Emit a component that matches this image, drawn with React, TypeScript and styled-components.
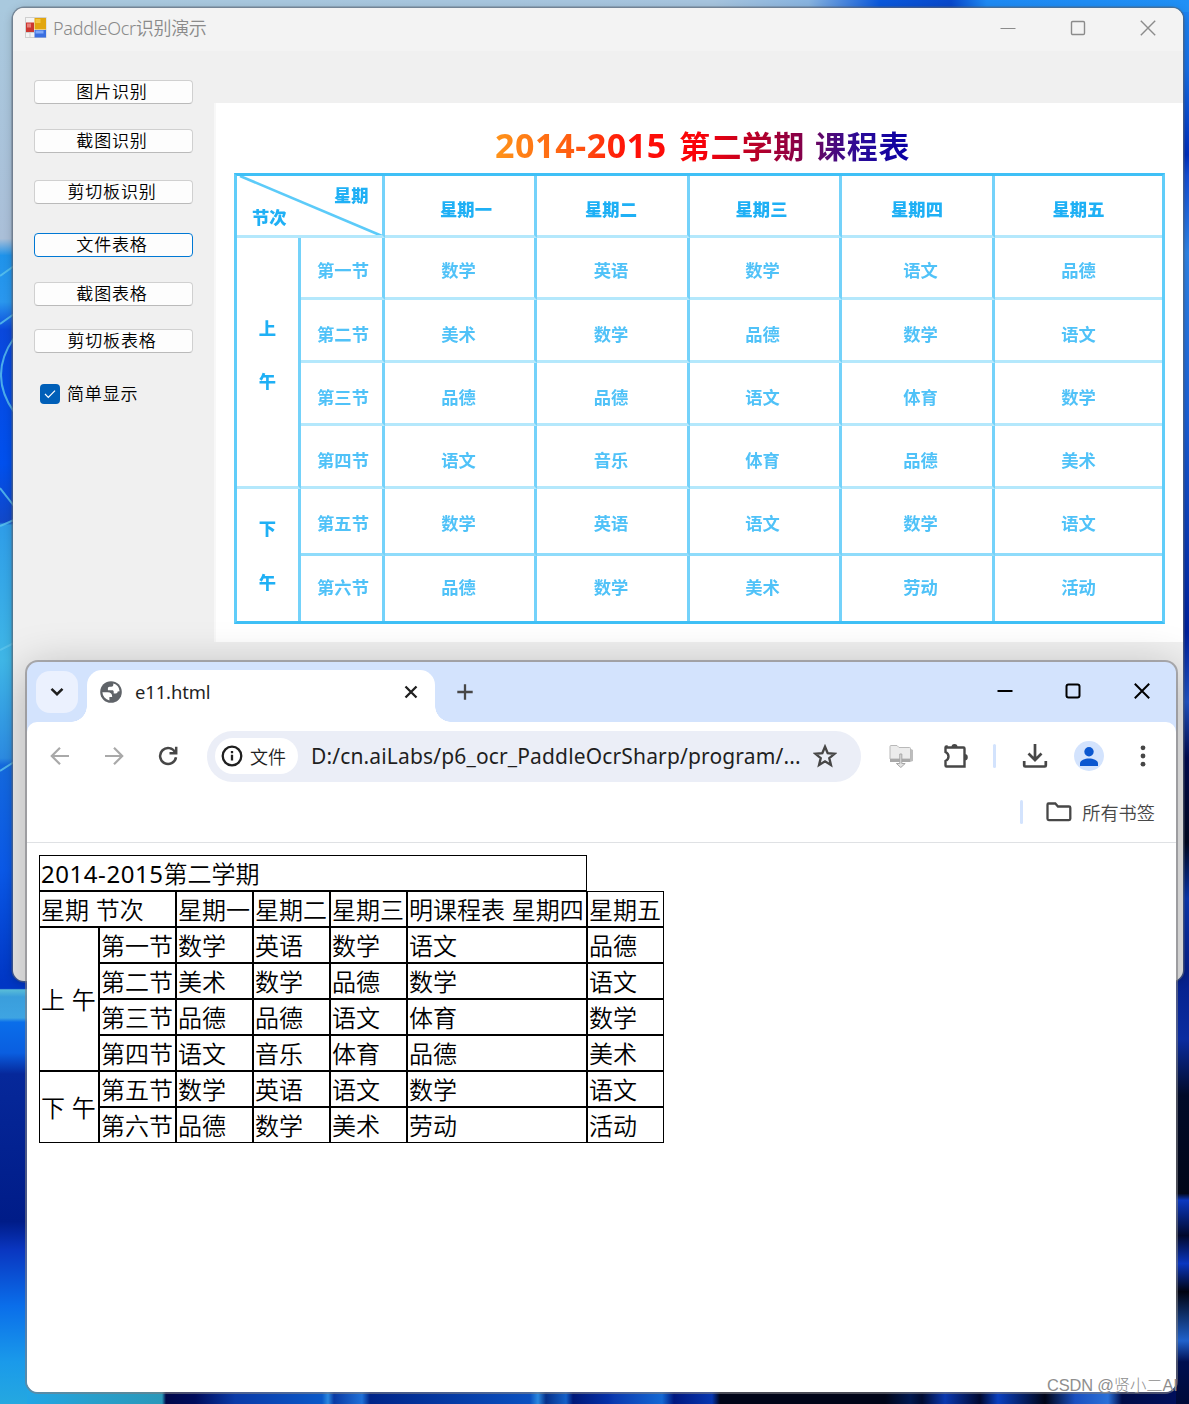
import React from "react";
import styled, { createGlobalStyle } from "styled-components";

const Global = createGlobalStyle`
  * { box-sizing: border-box; }
  body { margin: 0; overflow: hidden; }
`;

const UI = `"Noto Sans", "Noto Sans CJK SC", sans-serif`;
const CJK = `"Noto Sans CJK SC", "Noto Sans", sans-serif`;

const Desktop = styled.div`
  position: relative;
  width: 1189px;
  height: 1404px;
  overflow: hidden;
  background: #0a4ad8;
  font-family: ${UI};
`;

const Wallpaper = styled.svg`
  position: absolute;
  inset: 0;
`;

/* ---------- form window ---------- */

const FormWindow = styled.section`
  position: absolute;
  left: 13px;
  top: 8px;
  width: 1170px;
  height: 973px;
  border-radius: 11px;
  background: #f0f0f0;
  box-shadow: 0 0 0 1.5px rgba(90, 100, 115, 0.62), 0 2px 10px rgba(0, 0, 0, 0.25);
  display: flex;
  flex-direction: column;
  overflow: hidden;
`;

const FormTitleBar = styled.header`
  flex: none;
  height: 43px;
  background: #f3f3f3;
  display: flex;
  align-items: center;
  justify-content: space-between;
  padding: 0 27px 3px 12px;
`;

const FormTitle = styled.div`
  display: flex;
  align-items: center;
  gap: 6px;
  color: #8a8a8a;
  font-size: 18px;
  line-height: 24px;
  font-weight: 350;
  letter-spacing: -0.3px;
`;

const FormTitleText = styled.span`
  padding-bottom: 1px;
`;

const Controls = styled.div<{ $gap: number }>`
  display: flex;
  align-items: center;
  gap: ${(p) => p.$gap}px;
`;

const FormBody = styled.div`
  flex: 1;
  display: flex;
  align-items: flex-start;
`;

const Sidebar = styled.nav`
  flex: none;
  width: 201px;
  padding: 29px 0 0 21px;
  display: flex;
  flex-direction: column;
`;

const SideButton = styled.button<{ $after: number; $focus?: boolean }>`
  width: 159px;
  height: 24px;
  margin: 0 0 ${(p) => p.$after}px;
  padding: 0 3px 3px 0;
  border: 1px solid ${(p) => (p.$focus ? "#0078d4" : "#d0d0d0")};
  border-bottom-color: ${(p) => (p.$focus ? "#0078d4" : "#bababa")};
  border-radius: 4px;
  background: #fdfdfd;
  color: #000;
  font-family: ${CJK};
  font-weight: 350;
  font-size: 17px;
  letter-spacing: 0.85px;
  line-height: 20px;
  white-space: nowrap;
`;

const CheckRow = styled.label`
  display: flex;
  align-items: center;
  gap: 7px;
  padding-left: 6px;
  height: 24px;
  font-family: ${CJK};
  font-weight: 350;
  font-size: 17px;
  line-height: 20px;
  letter-spacing: 0.85px;
  color: #000;
`;

const CheckText = styled.span`
  padding-bottom: 2px;
`;

const CheckBox = styled.span`
  width: 20px;
  height: 20px;
  border-radius: 4px;
  background: #005fb8;
  display: flex;
  align-items: center;
  justify-content: center;
`;

const Picture = styled.div`
  flex: none;
  width: 969px;
  height: 539px;
  margin-top: 52px;
  background: #fff;
  border-left: 2px solid #f8f8f8;
  padding-left: 18px;
`;

const PictureTitle = styled.h1`
  margin: 0 0 0 261px;
  height: 70px;
  padding-top: 19px;
  display: flex;
  font-family: ${CJK};
  font-size: 31px;
  line-height: 46px;
  font-weight: 700;
  filter: blur(0.4px);
  width: 420px;
  white-space: nowrap;
  color: transparent;
  background: linear-gradient(90deg, #ff941a 0, #ff5a10 80px, #ff1408 130px, #fa0208 205px, #c40020 250px, #860048 305px, #500a78 335px, #2a0a98 365px, #0a00a4 410px);
  -webkit-background-clip: text;
  background-clip: text;
`;

const TitlePart = styled.span<{ $w: number; $size: number; $ls: number; $font?: string }>`
  width: ${(p) => p.$w}px;
  font-size: ${(p) => p.$size}px;
  letter-spacing: ${(p) => p.$ls}px;
  ${(p) => (p.$font ? `font-family: ${p.$font};` : "")}
`;

const Schedule = styled.div`
  display: grid;
  width: 931px;
  height: 451px;
  grid-template-columns: 64px 84px 152px 153px 152px 153px 1fr;
  grid-template-rows: 62px 62px 63px 63px 63px 67px 1fr;
  border: 3px solid #3fc0f6;
  border-left-color: #60cdf9;
  border-right-color: #60cdf9;
`;

const SchCell = styled.div<{
  $col: number;
  $row: number;
  $cs?: number;
  $rs?: number;
  $head?: boolean;
  $dx?: number;
  $dy?: number;
  $lastCol?: boolean;
  $lastRow?: boolean;
}>`
  grid-column: ${(p) => p.$col} / span ${(p) => p.$cs || 1};
  grid-row: ${(p) => p.$row} / span ${(p) => p.$rs || 1};
  display: flex;
  flex-direction: column;
  align-items: center;
  justify-content: center;
  padding-left: ${(p) => Math.max(0, (p.$dx || 0) * 2)}px;
  padding-right: ${(p) => Math.max(0, -(p.$dx || 0) * 2)}px;
  padding-top: ${(p) => Math.max(0, (p.$dy || 0) * 2)}px;
  padding-bottom: ${(p) => Math.max(0, -(p.$dy || 0) * 2)}px;
  border-right: ${(p) => (p.$lastCol ? "0" : "3px solid #74d2fa")};
  border-bottom: ${(p) => (p.$lastRow ? "0" : `3px solid ${p.$row === 6 ? "#8fdcfb" : "#b4e8fc"}`)};
  font-family: ${CJK};
  font-size: 17.3px;
  line-height: 24px;
  font-weight: ${(p) => (p.$head ? 900 : 700)};
  color: ${(p) => (p.$head ? "#1fb0f5" : "#50c2f8")};
  white-space: nowrap;

  span { filter: blur(0.6px); }
`;

const HalfDay = styled(SchCell)<{ $gap: number }>`
  gap: ${(p) => p.$gap}px;
  color: #1fb0f5;
`;

const Corner = styled.div`
  grid-column: 1 / span 2;
  grid-row: 1;
  border-right: 3px solid #74d2fa;
  border-bottom: 3px solid #b4e8fc;
  display: grid;
  grid-template: 100% / 100%;

  & > * { grid-area: 1 / 1; }
`;

const CornerText = styled.span<{ $top: number; $left: number }>`
  padding: ${(p) => p.$top}px 0 0 ${(p) => p.$left}px;
  font-family: ${CJK};
  font-size: 17.3px;
  line-height: 24px;
  font-weight: 900;
  color: #1fb0f5;
  filter: blur(0.6px);
`;

/* ---------- browser window ---------- */

const BrowserWindow = styled.section`
  position: absolute;
  left: 27px;
  top: 662px;
  width: 1149px;
  height: 730px;
  border-radius: 11px;
  background: #d3e3fd;
  box-shadow: 0 0 0 2px rgba(125, 125, 130, 0.6);
  display: flex;
  flex-direction: column;
  overflow: hidden;
`;

const WindowShade = styled.div`
  position: absolute;
  left: 13px;
  top: 8px;
  width: 1170px;
  height: 973px;
  border-radius: 11px;
  overflow: hidden;

  &::after {
    content: "";
    position: absolute;
    left: 14px;
    top: 654px;
    width: 1149px;
    height: 730px;
    border-radius: 11px;
    box-shadow: 0 10px 46px 2px rgba(0, 0, 0, 0.28);
  }
`;

const TabStrip = styled.div`
  flex: none;
  height: 60px;
  display: flex;
  align-items: flex-start;
`;

const TabSearch = styled.button`
  flex: none;
  width: 42px;
  height: 42px;
  margin: 9px 9px 0;
  padding: 0;
  border: 0;
  border-radius: 14px;
  background: #ebf1fe;
  display: flex;
  align-items: center;
  justify-content: center;
`;

const Tab = styled.div`
  position: relative;
  width: 348px;
  height: 52px;
  margin-top: 8px;
  border-radius: 15px 15px 0 0;
  background: #fff;
  display: flex;
  align-items: center;
  padding: 0 17px 8px 13px;
  font-size: 18.4px;
  color: #1f1f1f;

  &::before,
  &::after {
    content: "";
    position: absolute;
    bottom: 0;
    width: 16px;
    height: 16px;
  }
  &::before {
    left: -16px;
    background: radial-gradient(circle at 0 0, transparent 15.5px, #fff 16px);
  }
  &::after {
    right: -16px;
    background: radial-gradient(circle at 100% 0, transparent 15.5px, #fff 16px);
  }
`;

const TabTitle = styled.span`
  flex: 1;
  padding: 0 0 2px 13px;
  font-family: "Noto Sans", sans-serif;
  letter-spacing: -0.1px;
`;

const NewTab = styled.div`
  padding: 22px 0 0 22px;
  line-height: 0;
`;

const BrowserControls = styled(Controls)`
  margin-left: auto;
  padding: 21px 26.5px 0 0;
`;

const Toolbar = styled.div`
  flex: none;
  height: 121px;
  border-radius: 10px 10px 0 0;
  background: #fff;
  border-bottom: 1px solid #dfe1e4;
`;

const NavRow = styled.div`
  height: 68px;
  display: flex;
  align-items: center;
  padding-left: 21px;
`;

const Glyph = styled.svg<{ $ml?: number }>`
  flex: none;
  display: block;
  margin-left: ${(p) => p.$ml || 0}px;
`;

const Omnibox = styled.div`
  width: 654px;
  height: 51px;
  margin-left: 29px;
  border-radius: 26px;
  background: #ebeef7;
  display: flex;
  align-items: center;
  padding: 0 24px 0 8px;
`;

const FileChip = styled.div`
  width: 83px;
  height: 36px;
  border-radius: 18px;
  background: #fff;
  display: flex;
  align-items: center;
  gap: 7px;
  padding-left: 6px;
  font-family: ${CJK};
  font-weight: 350;
  font-size: 18px;
  color: #1f1f1f;
  white-space: nowrap;
`;

const Address = styled.span`
  flex: 1;
  padding: 0 0 1px 13px;
  font-family: "Noto Sans", sans-serif;
  font-size: 21px;
  letter-spacing: 0.15px;
  color: #1f1f1f;
  white-space: nowrap;
`;

const Divider = styled.i<{ $ml: number }>`
  width: 3px;
  height: 24px;
  margin-left: ${(p) => p.$ml}px;
  border-radius: 2px;
  background: #d3e3fd;
`;

const Avatar = styled.div`
  width: 30px;
  height: 30px;
  margin-left: 26px;
  border-radius: 50%;
  background: #d3e3fd;
  display: flex;
  align-items: center;
  justify-content: center;
`;

const BookmarkRow = styled.div`
  display: flex;
  align-items: center;
  justify-content: flex-end;
  height: 44px;
  padding-right: 21px;
  font-family: ${CJK};
  font-weight: 350;
  font-size: 18.2px;
  color: #474747;
`;

const BookmarkLabel = styled.span`
  padding: 0 0 0 10px;
`;

const Page = styled.main`
  flex: 1;
  background: #fff;
  padding: 12px;
`;

const ResultTable = styled.table`
  table-layout: fixed;
  width: 625px;
  border-collapse: separate;
  border-spacing: 0;
  font-family: ${CJK};
  font-weight: 350;
  font-size: 24px;
  line-height: 30px;
  word-spacing: 1.5px;
  color: #000;

  tr { height: 36px; }
  td {
    height: 36px;
    border: 1px solid #000;
    padding: 1px 0 1px 1px;
    white-space: nowrap;
    text-align: left;
    vertical-align: middle;
  }
`;

const Digits = styled.span`
  font-family: "Noto Sans", sans-serif;
  font-weight: 400;
  letter-spacing: 0.55px;
`;

const Watermark = styled.div`
  position: absolute;
  left: 1047px;
  top: 1373px;
  width: 134px;
  white-space: nowrap;
  font-family: "Liberation Sans", "Noto Sans CJK SC", sans-serif;
  font-weight: 300;
  font-size: 16.4px;
  line-height: 24px;
  letter-spacing: -0.15px;
  color: #8e8e8e;
`;

const DAYS = ["星期一", "星期二", "星期三", "星期四", "星期五"];
const LESSONS = [
  ["第一节", "数学", "英语", "数学", "语文", "品德"],
  ["第二节", "美术", "数学", "品德", "数学", "语文"],
  ["第三节", "品德", "品德", "语文", "体育", "数学"],
  ["第四节", "语文", "音乐", "体育", "品德", "美术"],
  ["第五节", "数学", "英语", "语文", "数学", "语文"],
  ["第六节", "品德", "数学", "美术", "劳动", "活动"],
];
const HEAD_DX = [6.5, -1, -3, 0, 0];
const CELL_DX = [1.5, -1, -1, -2, 3.5, 0];
const ROW_DY = [2, 3.5, 4, 4, 2, -1.5];

const BUTTONS: { text: string; after: number; focus?: boolean }[] = [
  { text: "图片识别", after: 25 },
  { text: "截图识别", after: 27 },
  { text: "剪切板识别", after: 29 },
  { text: "文件表格", after: 25, focus: true },
  { text: "截图表格", after: 23 },
  { text: "剪切板表格", after: 29 },
];

/* colour runs along the bottom edge of the wallpaper: [x, colour] */
const BOTTOM_STOPS: [number, string][] = [
  [0, "#1ea8f0"],
  [90, "#289fcc"],
  [162, "#2a98ba"],
  [166, "#00084a"],
  [195, "#000c5c"],
  [235, "#0a3aa8"],
  [322, "#0a58c8"],
  [328, "#2a88e0"],
  [334, "#0a3aa4"],
  [362, "#1f70d8"],
  [370, "#002488"],
  [530, "#0a50c0"],
  [538, "#2a88e0"],
  [546, "#06308a"],
  [566, "#1460c8"],
  [573, "#001878"],
  [608, "#0430a8"],
  [614, "#0a3ab0"],
  [662, "#1468d4"],
  [674, "#001880"],
  [712, "#0636b0"],
  [720, "#000418"],
  [885, "#000418"],
  [910, "#001850"],
  [922, "#000a30"],
  [945, "#0a38b0"],
  [980, "#000830"],
  [998, "#0a40c0"],
  [1045, "#000418"],
  [1075, "#1a50c0"],
  [1108, "#2a70d8"],
  [1122, "#000c48"],
  [1189, "#001060"],
];

function DesktopArt() {
  return (
    <Wallpaper width="1189" height="1404" viewBox="0 0 1189 1404">
      <defs>
        <linearGradient id="left" gradientUnits="userSpaceOnUse" x1="0" y1="0" x2="0" y2="1404">
          <stop offset="0" stopColor="#a9c9de" />
          <stop offset=".17" stopColor="#aabfd8" />
          <stop offset=".182" stopColor="#1f93ea" />
          <stop offset=".215" stopColor="#2a97ee" />
          <stop offset=".235" stopColor="#0a48dc" />
          <stop offset=".33" stopColor="#0050ee" />
          <stop offset=".372" stopColor="#1248c8" />
          <stop offset=".374" stopColor="#2f9de8" />
          <stop offset=".47" stopColor="#3fb6e6" />
          <stop offset=".54" stopColor="#2c8ae0" />
          <stop offset=".545" stopColor="#1468dc" />
          <stop offset=".62" stopColor="#0a58e6" />
          <stop offset=".70" stopColor="#0036c4" />
          <stop offset=".704" stopColor="#0036c4" />
          <stop offset=".705" stopColor="#58bcd8" />
          <stop offset=".71" stopColor="#3a9edc" />
          <stop offset=".725" stopColor="#3ea4e2" />
          <stop offset=".728" stopColor="#0a6eea" />
          <stop offset=".75" stopColor="#0a5ee0" />
          <stop offset=".765" stopColor="#06289a" />
          <stop offset=".87" stopColor="#001c88" />
          <stop offset=".89" stopColor="#0a36c0" />
          <stop offset=".93" stopColor="#0a6eea" />
          <stop offset=".97" stopColor="#1a9aea" />
          <stop offset="1" stopColor="#25a8e0" />
        </linearGradient>
        <linearGradient id="right" gradientUnits="userSpaceOnUse" x1="0" y1="0" x2="0" y2="1404">
          <stop offset="0" stopColor="#1e88f5" />
          <stop offset=".05" stopColor="#1670e8" />
          <stop offset=".11" stopColor="#0030c0" />
          <stop offset=".125" stopColor="#1550d8" />
          <stop offset=".18" stopColor="#2f86ea" />
          <stop offset=".3" stopColor="#1a60d8" />
          <stop offset=".45" stopColor="#0022a0" />
          <stop offset=".5" stopColor="#2154c4" />
          <stop offset=".54" stopColor="#000a50" />
          <stop offset=".6" stopColor="#000820" />
          <stop offset=".64" stopColor="#0a38b0" />
          <stop offset=".69" stopColor="#06208a" />
          <stop offset=".74" stopColor="#0a2ca0" />
          <stop offset=".78" stopColor="#010a28" />
          <stop offset=".85" stopColor="#010618" />
          <stop offset=".855" stopColor="#0b38c0" />
          <stop offset=".88" stopColor="#01082c" />
          <stop offset=".9" stopColor="#0a36c0" />
          <stop offset=".92" stopColor="#000210" />
          <stop offset=".955" stopColor="#2062cc" />
          <stop offset=".97" stopColor="#000e50" />
          <stop offset="1" stopColor="#000a38" />
        </linearGradient>
        <linearGradient id="top">
          <stop offset="0" stopColor="#a9c9de" />
          <stop offset=".6" stopColor="#a6c4de" />
          <stop offset=".68" stopColor="#88b4e0" />
          <stop offset=".74" stopColor="#0a58dc" />
          <stop offset=".8" stopColor="#0848cc" />
          <stop offset=".83" stopColor="#1e8af4" />
          <stop offset="1" stopColor="#2090f6" />
        </linearGradient>
        <linearGradient id="bottom" gradientUnits="userSpaceOnUse" x1="0" y1="0" x2="1189" y2="0">
          {BOTTOM_STOPS.map(([x, c]) => (
            <stop key={x} offset={x / 1189} stopColor={c} />
          ))}
        </linearGradient>
      </defs>
      <rect width="600" height="1404" fill="url(#left)" />
      <rect x="600" width="589" height="1404" fill="url(#right)" />
      <rect width="1189" height="12" fill="url(#top)" />
      <rect x="27" y="1384" width="1149" height="20" fill="url(#bottom)" />
      <g fill="none" stroke="#5cc4ec" strokeWidth="2" opacity=".8">
        <path d="M0 276 14 266M0 324 14 314M14 338Q-12 375 14 412M0 488 14 506M0 526 14 520M0 650 14 643M0 771 14 762" />
      </g>
    </Wallpaper>
  );
}

function FormIcon() {
  return (
    <Glyph width="22" height="22" viewBox="0 0 22 22">
      <rect x=".5" y=".5" width="20.5" height="20" fill="#f4f4f4" stroke="#cfcfcf" />
      <path d="M.5 15.500h9M5 15.500v5" stroke="#cfcfcf" />
      <rect x="1" y="5.500" width="8" height="9.500" fill="#cc3730" />
      <rect x="2" y="6.500" width="4" height="4" fill="#e8807a" />
      <rect x="9.500" y="1" width="11.500" height="11.500" fill="#e2a60f" />
      <rect x="10.500" y="2" width="5" height="4" fill="#f2c640" />
      <rect x="9.500" y="13" width="11.500" height="7.500" fill="#3a6fe0" />
      <rect x="10.500" y="13.500" width="8" height="3" fill="#7fa8f8" />
    </Glyph>
  );
}

function CaptionIcons({ color, weight, r }: { color: string; weight: number; r: number }) {
  return (
    <>
      <Glyph width="16" height="16" viewBox="0 0 16 16" stroke={color} strokeWidth={weight > 1.5 ? weight : 1}>
        <path d={weight > 1.5 ? "M.5 8h15" : "M.5 8.500h15"} />
      </Glyph>
      <Glyph width="16" height="16" viewBox="0 0 16 16" fill="none" stroke={color} strokeWidth={weight}>
        <rect x="1.500" y="1.500" width="13" height="13" rx={r} />
      </Glyph>
      <Glyph width="16" height="16" viewBox="0 0 16 16" stroke={color} strokeWidth={weight}>
        <path d="m.8.8 14.400 14.400M15.200.8.8 15.200" />
      </Glyph>
    </>
  );
}

function FormApp() {
  return (
    <FormWindow>
      <FormTitleBar>
        <FormTitle>
          <FormIcon />
          <FormTitleText>PaddleOcr识别演示</FormTitleText>
        </FormTitle>
        <Controls $gap={54}>
          <CaptionIcons color="#8b8b8b" weight={1.4} r={1.2} />
        </Controls>
      </FormTitleBar>
      <FormBody>
        <Sidebar>
          {BUTTONS.map((b) => (
            <SideButton key={b.text} $after={b.after} $focus={b.focus}>
              {b.text}
            </SideButton>
          ))}
          <CheckRow>
            <CheckBox>
              <svg width="12" height="10" viewBox="0 0 12 10" fill="none" stroke="#fff" strokeWidth="1.200">
                <path d="m1 5 3.300 3.300L11 1.600" />
              </svg>
            </CheckBox>
            <CheckText>简单显示</CheckText>
          </CheckRow>
        </Sidebar>
        <Picture>
          <PictureTitle>
            <TitlePart $w={184} $size={34} $ls={0.6} $font={`"Noto Sans", sans-serif`}>2014-2015</TitlePart>
            <TitlePart $w={136} $size={31} $ls={0.4}>第二学期</TitlePart>
            <TitlePart $w={100} $size={31} $ls={0.8}>课程表</TitlePart>
          </PictureTitle>
          <Schedule>
            <Corner>
              <svg width="100%" height="100%" viewBox="0 0 145 59" preserveAspectRatio="none">
                <path d="M3 0 145 60" stroke="#5ccbf9" strokeWidth="2.600" />
              </svg>
              <CornerText $top={7} $left={97}>星期</CornerText>
              <CornerText $top={29} $left={15}>节次</CornerText>
            </Corner>
            {DAYS.map((d, i) => (
              <SchCell key={d} $col={i + 3} $row={1} $head $dx={HEAD_DX[i]} $dy={3} $lastCol={i === 4}>
                <span>{d}</span>
              </SchCell>
            ))}
            <HalfDay $col={1} $row={2} $rs={4} $head $gap={29} $dy={-8}>
              <span>上</span>
              <span>午</span>
            </HalfDay>
            <HalfDay $col={1} $row={6} $rs={2} $head $gap={30} $dy={-0.5} $lastRow>
              <span>下</span>
              <span>午</span>
            </HalfDay>
            {LESSONS.map((row, r) =>
              row.map((t, c) => (
                <SchCell
                  key={`${r}-${c}`}
                  $col={c + 2}
                  $row={r + 2}
                  $dx={CELL_DX[c]}
                  $dy={ROW_DY[r]}
                  $lastCol={c === 5}
                  $lastRow={r === 5}
                >
                  <span>{t}</span>
                </SchCell>
              )),
            )}
          </Schedule>
        </Picture>
      </FormBody>
    </FormWindow>
  );
}

function Result() {
  return (
    <ResultTable>
      <colgroup>
        {[60, 77, 77, 77, 77, 180, 77].map((w, i) => (
          <col key={i} style={{ width: w }} />
        ))}
      </colgroup>
      <tbody>
        <tr>
          <td colSpan={6}>
            <Digits>2014-2015</Digits>第二学期
          </td>
        </tr>
        <tr>
          <td colSpan={2}>星期 节次</td>
          <td>星期一</td>
          <td>星期二</td>
          <td>星期三</td>
          <td>明课程表 星期四</td>
          <td>星期五</td>
        </tr>
        {LESSONS.map((row, r) => (
          <tr key={row[0]}>
            {r === 0 && <td rowSpan={4}>上 午</td>}
            {r === 4 && <td rowSpan={2}>下 午</td>}
            {row.map((t, c) => (
              <td key={c}>{t}</td>
            ))}
          </tr>
        ))}
      </tbody>
    </ResultTable>
  );
}

function Browser() {
  return (
    <BrowserWindow>
      <TabStrip>
        <TabSearch>
          <svg width="14" height="10" viewBox="0 0 14 10" fill="none" stroke="#1f1f1f" strokeWidth="2.500">
            <path d="m1.500 1.800 5.500 5.400 5.500-5.400" />
          </svg>
        </TabSearch>
        <Tab>
          <Glyph width="22" height="22" viewBox="0 0 22 22">
            <circle cx="11" cy="11" r="10.800" fill="#5f6368" />
            <path
              d="M2.400 11.300h5.200c3.200 0 4.600 1.500 4.600 4.600H9.400v3.600a8.700 8.700 0 0 1-7-8.200zM13.300 2.600v1.200c0 1.300-.8 2-2 2H9.600c-1.200 0-1.700.7-1.700 1.700v1.700h4.300c1 0 1.500.6 1.500 1.600v1.600h1.900c1.400 0 2-.8 2.100-2l1.900-.1a8.700 8.700 0 0 0-6.300-7.700z"
              fill="#fff"
            />
          </Glyph>
          <TabTitle>e11.html</TabTitle>
          <Glyph width="14" height="14" viewBox="0 0 14 14" stroke="#1f1f1f" strokeWidth="2.300">
            <path d="m1.500 1.500 11 11M12.500 1.500l-11 11" />
          </Glyph>
        </Tab>
        <NewTab>
          <svg width="16" height="16" viewBox="0 0 16 16" stroke="#474747" strokeWidth="2.300">
            <path d="M8 .3v15.400M.3 8h15.400" />
          </svg>
        </NewTab>
        <BrowserControls $gap={52.5}>
          <CaptionIcons color="#000" weight={2} r={2} />
        </BrowserControls>
      </TabStrip>
      <Toolbar>
        <NavRow>
          <Glyph $ml={2} width="20" height="20" viewBox="0 0 20 20" fill="none" stroke="#a9a9a9" strokeWidth="2.200">
            <path d="M19 10H2.500M10 1.800 1.800 10l8.200 8.200" />
          </Glyph>
          <Glyph $ml={34} width="20" height="20" viewBox="0 0 20 20" fill="none" stroke="#a9a9a9" strokeWidth="2.200">
            <path d="M1 10h16.500M10 1.800l8.200 8.200-8.200 8.200" />
          </Glyph>
          <Glyph $ml={34} width="20" height="20" viewBox="0 0 20 20" fill="none" stroke="#474747" strokeWidth="2.500">
            <path d="M17.300 6.500A8 8 0 1 0 18 11.300M18.200.8v6.500h-6.700" />
          </Glyph>
          <Omnibox>
            <FileChip>
              <Glyph width="22" height="22" viewBox="0 0 22 22" fill="none" stroke="#1f1f1f" strokeWidth="2.300">
                <circle cx="11" cy="11" r="9.300" />
                <path d="M11 9.800v5.700M11 6v2.300" />
              </Glyph>
              文件
            </FileChip>
            <Address>D:/cn.aiLabs/p6_ocr_PaddleOcrSharp/program/...</Address>
            <Glyph width="24" height="24" viewBox="0 0 24 24" fill="none" stroke="#474747" strokeWidth="2.400">
              <path d="m12 2.800 2.700 6.400 6.800.6-5.200 4.400 1.600 6.700L12 17.300l-5.900 3.600 1.600-6.700-5.200-4.400 6.800-.6z" />
            </Glyph>
          </Omnibox>
          <Glyph $ml={28} width="25" height="24" viewBox="0 0 25 24">
            <path d="M3 5h19l2 1v11l-3 1H3z" fill="#bdbdbd" />
            <path d="M1 2.500Q1 1.500 2 1.500h6l2 2h10.500q1 0 1 1V15H1z" fill="#ececec" stroke="#b9b9b9" />
            <path d="M1 15h20v3H1z" fill="#a9a9a9" />
            <path d="M10.800 10h2v9.500h3.400L11.800 23.500l-4.400-4h3.400z" fill="#e2e2e2" stroke="#a6a6a6" />
          </Glyph>
          <Glyph $ml={28} width="27" height="26" viewBox="0 0 27 26">
            <path
              d="M4.500 4.500h17a1 1 0 0 1 1 1v18h-18a1 1 0 0 1-1-1v-4.500q3-1.500 3-4.500t-3-4.500v-4.500a1 1 0 0 1 1-1z"
              fill="none"
              stroke="#474747"
              strokeWidth="2.400"
            />
            <path d="M9.500 4a3 3 0 0 1 6 0zM22.500 11a3.300 3.300 0 0 1 0 6.600z" fill="#474747" />
          </Glyph>
          <Divider $ml={24} />
          <Glyph $ml={26} width="26" height="26" viewBox="0 0 26 26" fill="none" stroke="#474747" strokeWidth="2.700">
            <path d="M13 1v15M6.500 10.500 13 17l6.500-6.500M2.200 18v4.500a1 1 0 0 0 1 1h19.600a1 1 0 0 0 1-1V18" />
          </Glyph>
          <Avatar>
            <svg width="18" height="19" viewBox="0 0 18 19" fill="#0b57d0">
              <circle cx="9" cy="4.700" r="4.700" />
              <path d="M0 19v-2.500c0-3.300 5-5 9-5s9 1.700 9 5V19z" />
            </svg>
          </Avatar>
          <Glyph $ml={36} width="6" height="22" viewBox="0 0 6 22" fill="#474747">
            <circle cx="3" cy="2.800" r="2.400" />
            <circle cx="3" cy="11" r="2.400" />
            <circle cx="3" cy="19.200" r="2.400" />
          </Glyph>
        </NavRow>
        <BookmarkRow>
          <Divider $ml={0} />
          <Glyph $ml={23} width="26" height="20" viewBox="0 0 26 20" fill="none" stroke="#474747" strokeWidth="2.300">
            <path d="M2.500 1.500h6.800l2.700 3h11q1.300 0 1.300 1.300v11q0 1.300-1.300 1.300H2.800q-1.300 0-1.300-1.300v-14q0-1.300 1-1.300z" />
          </Glyph>
          <BookmarkLabel>所有书签</BookmarkLabel>
        </BookmarkRow>
      </Toolbar>
      <Page>
        <Result />
      </Page>
    </BrowserWindow>
  );
}

export default function App() {
  return (
    <Desktop>
      <Global />
      <DesktopArt />
      <FormApp />
      <WindowShade />
      <Browser />
      <Watermark>CSDN @贤小二AI</Watermark>
    </Desktop>
  );
}
